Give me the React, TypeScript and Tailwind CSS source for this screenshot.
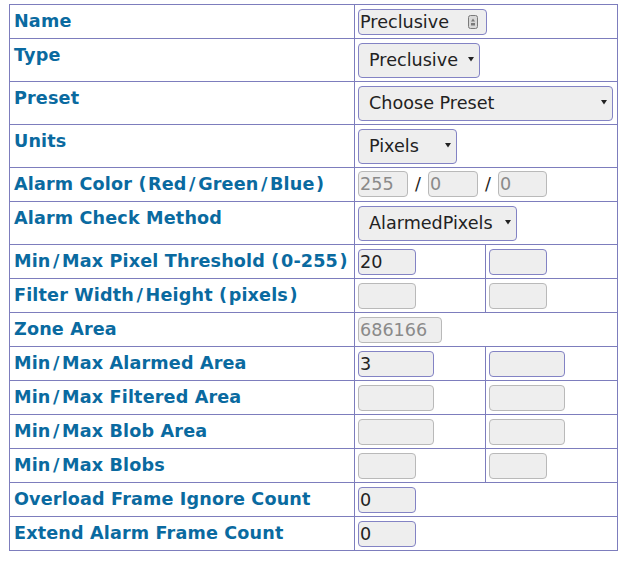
import React from "react"

const line = "border border-[#7d7dbd] p-0"

// the labels' slashes and brackets sit wider apart than DejaVu sets them
function spaced(text: string) {
  return text.split(/([/()])/).map((part, i) => {
    if (part === "/") return <span key={i} className="mx-[2.5px]">/</span>
    if (part === "(") return <span key={i} className="mr-[1.5px]">(</span>
    if (part === ")") return <span key={i} className="ml-[1.5px]">)</span>
    return part
  })
}

function Label({ text, tall }: { text: string; tall?: boolean }) {
  return (
    <td className={`${line} align-top`}>
      <div
        className={`${tall ? "h-[42px]" : "h-[33px]"} pl-[4px] pt-[6px] text-[17.6px] leading-[20px] font-bold tracking-[0.15px] text-[#0a6aa0] whitespace-nowrap`}
      >
        {spaced(text)}
      </div>
    </td>
  )
}

function Field({ value, w, off }: { value?: string; w: string; off?: boolean }) {
  return (
    <input
      readOnly
      disabled={off}
      defaultValue={value ?? ""}
      className={`${w} h-[26px] rounded-[4px] border bg-[#eeeeee] px-[1px] text-[17.6px] leading-[20px] outline-none ${
        off ? "border-[#b9b9b9] text-[#8a8a8a]" : "border-[#8383c4] text-[#222222]"
      }`}
    />
  )
}

function Select({ value, w }: { value: string; w: string }) {
  return (
    <div
      className={`${w} h-[35px] flex items-center justify-between rounded-[4px] border border-[#8383c4] bg-[#eeeeee] pl-[10px] pr-[5px] text-[17.6px] leading-[20px] text-[#222222]`}
    >
      <span>{value}</span>
      <svg width="6" height="6" viewBox="0 0 6 6" className="mb-[2px]">
        <path d="M0 1h6L3 5.5z" fill="#222" />
      </svg>
    </div>
  )
}

function Cell({ children, span, tall }: { children: React.ReactNode; span?: number; tall?: boolean }) {
  return (
    <td colSpan={span} className={line}>
      <div className={`${tall ? "h-[42px]" : "h-[33px]"} flex items-center px-[3px]`}>{children}</div>
    </td>
  )
}

function Pair({ label, a, b, w, offA }: { label: string; a?: string; b?: string; w: string; offA?: boolean }) {
  return (
    <tr>
      <Label text={label} />
      <Cell>
        <Field value={a} w={w} off={offA} />
      </Cell>
      <Cell>
        <Field value={b} w={w} off={offA} />
      </Cell>
    </tr>
  )
}

export default function App() {
  return (
    <div className="min-h-[565px] bg-white pl-[9px] pt-[4px] font-['DejaVu_Sans',Verdana,sans-serif]">
      <table className="w-[608px] table-fixed border-collapse">
        <colgroup>
          <col className="w-[345px]" />
          <col className="w-[131px]" />
          <col className="w-[132px]" />
        </colgroup>
        <tbody>
          <tr>
            <Label text="Name" />
            <Cell span={2}>
              <div className="relative">
                <Field value="Preclusive" w="w-[129px]" />
                <svg width="10" height="14" viewBox="0 0 10 14" className="absolute right-[9px] top-[6px]">
                  <rect x="0.5" y="0.5" width="9" height="13" rx="2" fill="#d8d8d8" stroke="#7a7a7a" />
                  <path d="M5 3.5L7 6.5H3z" fill="#7a7a7a" />
                  <rect x="3" y="8" width="4" height="2.5" fill="#7a7a7a" />
                </svg>
              </div>
            </Cell>
          </tr>
          <tr>
            <Label text="Type" tall />
            <Cell span={2} tall>
              <Select value="Preclusive" w="w-[122px]" />
            </Cell>
          </tr>
          <tr>
            <Label text="Preset" tall />
            <Cell span={2} tall>
              <Select value="Choose Preset" w="w-[255px]" />
            </Cell>
          </tr>
          <tr>
            <Label text="Units" tall />
            <Cell span={2} tall>
              <Select value="Pixels" w="w-[99px]" />
            </Cell>
          </tr>
          <tr>
            <Label text="Alarm Color (Red/Green/Blue)" />
            <Cell span={2}>
              <div className="flex items-center gap-[7px] text-[17.6px] text-[#222222]">
                <Field value="255" w="w-[50px]" off />
                <span>/</span>
                <Field value="0" w="w-[50px]" off />
                <span>/</span>
                <Field value="0" w="w-[49px]" off />
              </div>
            </Cell>
          </tr>
          <tr>
            <Label text="Alarm Check Method" tall />
            <Cell span={2} tall>
              <Select value="AlarmedPixels" w="w-[159px]" />
            </Cell>
          </tr>
          <tr>
            <Label text="Min/Max Pixel Threshold (0-255)" />
            <Cell>
              <Field value="20" w="w-[58px]" />
            </Cell>
            <Cell>
              <Field w="w-[58px]" />
            </Cell>
          </tr>
          <Pair label="Filter Width/Height (pixels)" w="w-[58px]" offA />
          <tr>
            <Label text="Zone Area" />
            <Cell span={2}>
              <Field value="686166" w="w-[84px]" off />
            </Cell>
          </tr>
          <tr>
            <Label text="Min/Max Alarmed Area" />
            <Cell>
              <Field value="3" w="w-[76px]" />
            </Cell>
            <Cell>
              <Field w="w-[76px]" />
            </Cell>
          </tr>
          <Pair label="Min/Max Filtered Area" w="w-[76px]" offA />
          <Pair label="Min/Max Blob Area" w="w-[76px]" offA />
          <Pair label="Min/Max Blobs" w="w-[58px]" offA />
          <tr>
            <Label text="Overload Frame Ignore Count" />
            <Cell span={2}>
              <Field value="0" w="w-[58px]" />
            </Cell>
          </tr>
          <tr>
            <Label text="Extend Alarm Frame Count" />
            <Cell span={2}>
              <Field value="0" w="w-[58px]" />
            </Cell>
          </tr>
        </tbody>
      </table>
    </div>
  )
}
